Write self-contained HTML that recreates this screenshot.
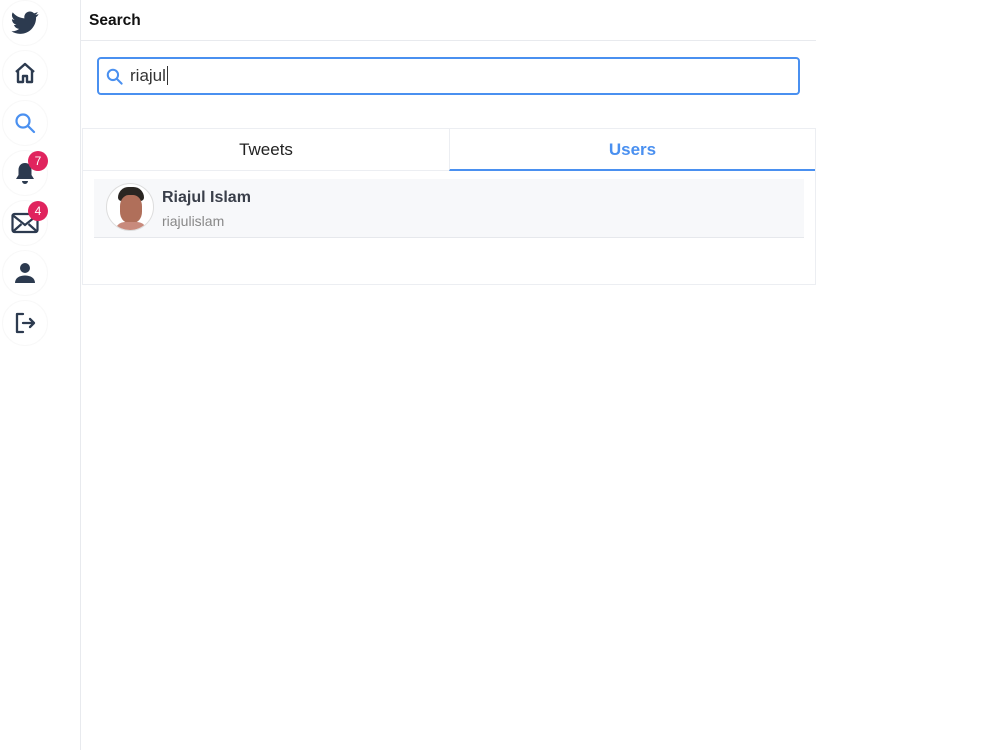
<!DOCTYPE html>
<html><head><meta charset="utf-8"><style>
*{box-sizing:border-box;margin:0;padding:0}
body{width:1000px;height:750px;background:#fff;font-family:"Liberation Sans",sans-serif;position:relative;overflow:hidden;color:#222}
.side{position:absolute;left:0;top:0;width:81px;height:750px;border-right:1px solid #e8eaee}
.ic{position:absolute;left:2px;width:46px;height:46px;border-radius:50%;border:1px solid #f8f8f8;display:flex;align-items:center;justify-content:center}
.badge{position:absolute;left:25px;top:0px;width:20px;height:20px;border-radius:50%;background:#e0245e;color:#fff;font-size:12px;text-align:center;line-height:20px}
.hdr{position:absolute;left:81px;top:0;width:735px;height:41px;border-bottom:1px solid #e8eaee;font-weight:bold;font-size:15.5px;padding:12px 8px;color:#111}
.search{position:absolute;left:97px;top:57px;width:703px;height:38px;border:2px solid #4a90f0;border-radius:4px}
.search span{position:absolute;left:31px;top:7px;font-size:17px;color:#333}
.panel{position:absolute;left:82px;top:128px;width:734px;height:157px;border:1px solid #eceef2}
.tab{position:absolute;top:0;height:42px;width:366px;text-align:center;line-height:42px;font-size:17px}
.row{position:absolute;left:11px;top:50px;width:710px;height:59px;background:#f7f8fa;border-bottom:1px solid #e6e8ec}
</style></head><body>
<div class="side">
 <div class="ic" style="top:0"><svg width="28" height="24" viewBox="0 0 24 20"><path fill="#2c3a4f" d="M23.6 2.4c-.9.4-1.8.6-2.8.8 1-.6 1.8-1.6 2.1-2.7-.9.6-2 1-3.1 1.2C18.9.7 17.6.1 16.2.1c-2.7 0-4.8 2.200-4.8 4.8 0 .4 0 .8.1 1.1C7.5 5.8 3.9 3.9 1.5.9c-.4.7-.7 1.6-.7 2.4 0 1.7.9 3.2 2.200 4-.8 0-1.5-.2-2.200-.6v.1c0 2.300 1.7 4.300 3.9 4.7-.4.1-.8.2-1.3.2-.3 0-.6 0-.9-.1.6 1.9 2.400 3.300 4.500 3.400-1.7 1.300-3.700 2.100-6 2.100H.4c2.100 1.400 4.700 2.200 7.400 2.200 8.900 0 13.700-7.400 13.700-13.700v-.6c1-.7 1.800-1.600 2.100-2.600z"/></svg></div>
 <div class="ic" style="top:50px"><svg width="24" height="24" viewBox="0 0 24 24" fill="none" stroke="#2c3a4f" stroke-width="2.4" stroke-linejoin="round"><path d="M3 11L12 3l9 8M5 9.5V21h5v-6h4v6h5V9.5"/></svg></div>
 <div class="ic" style="top:100px"><svg width="24" height="24" viewBox="0 0 24 24" fill="none" stroke="#4a90f0" stroke-width="2.2" stroke-linecap="round"><circle cx="10" cy="10" r="6.5"/><path d="M15 15l6 6"/></svg></div>
 <div class="ic" style="top:150px"><svg width="22" height="24" viewBox="0 0 22 24"><path fill="#2c3a4f" d="M11 2c-4 0-6.5 3-6.5 7v5L2 18h18l-2.5-4V9C17.5 5 15 2 11 2zM8 20a3 3 0 006 0z"/></svg><div class="badge">7</div></div>
 <div class="ic" style="top:200px"><svg width="28" height="22" viewBox="0 0 28 22" fill="none" stroke="#2c3a4f" stroke-width="2.2"><rect x="1.5" y="2" width="25" height="18" rx="2"/><path d="M1.5 3l12.5 10L26.5 3M1.5 20l9-8M26.5 20l-9-8"/></svg><div class="badge">4</div></div>
 <div class="ic" style="top:250px"><svg width="22" height="22" viewBox="0 0 22 22"><circle cx="11" cy="6" r="5" fill="#2c3a4f"/><path fill="#2c3a4f" d="M1 21c0-5 4.5-7.5 10-7.5S21 16 21 21z"/></svg></div>
 <div class="ic" style="top:300px"><svg width="24" height="24" viewBox="0 0 24 24" fill="none" stroke="#2c3a4f" stroke-width="2.3" stroke-linecap="round" stroke-linejoin="round"><path d="M10 3H4v18h6M10 12h11M17 8l4 4-4 4"/></svg></div>
</div>
<div class="hdr">Search</div>
<div class="search"><svg style="position:absolute;left:6px;top:8px" width="19" height="19" viewBox="0 0 24 24" fill="none" stroke="#4a90f0" stroke-width="2.6" stroke-linecap="round"><circle cx="10" cy="10" r="6.5"/><path d="M15 15l6 6"/></svg><span>riajul<span style="position:static;border-left:1px solid #333;margin-left:1px"></span></span></div>
<div class="panel">
 <div class="tab" style="left:0;border-bottom:1px solid #eceef2;color:#222">Tweets</div>
 <div class="tab" style="left:366px;border-left:1px solid #eceef2;border-bottom:2px solid #4a90f0;color:#4a90f0;font-weight:bold">Users</div>
 <div class="row">
  <div style="position:absolute;left:12px;top:4px;width:48px;height:48px;border-radius:50%;border:1px solid #ddd;background:#fff;overflow:hidden">
   <div style="position:absolute;left:11px;top:3px;width:26px;height:14px;background:#2a2622;border-radius:12px 12px 4px 4px"></div>
   <div style="position:absolute;left:13px;top:11px;width:22px;height:28px;background:#b06f5a;border-radius:40%"></div>
   <div style="position:absolute;left:8px;top:38px;width:32px;height:12px;background:#c88a7c;border-radius:10px 10px 0 0"></div>
  </div>
  <div style="position:absolute;left:68px;top:10px;font-size:16px;font-weight:bold;color:#3a3f4a">Riajul Islam</div>
  <div style="position:absolute;left:68px;top:34px;font-size:14px;color:#888">riajulislam</div>
 </div>
</div>
</body></html>
